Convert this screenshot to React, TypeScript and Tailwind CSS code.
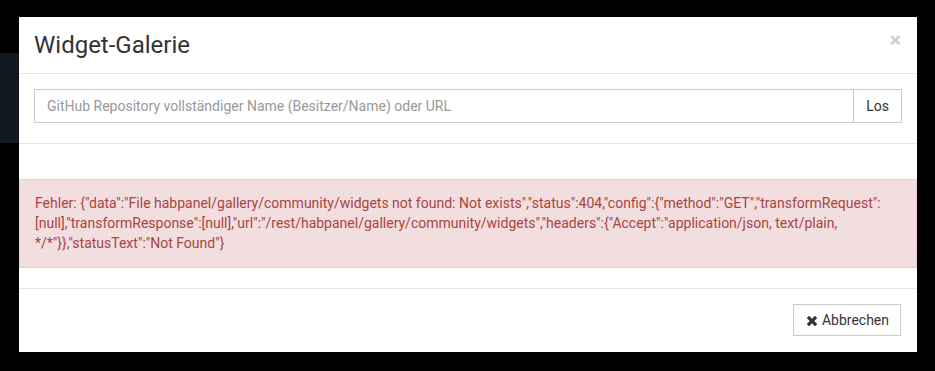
import React from "react";

function TimesIcon() {
  return (
    <svg viewBox="0 0 1408 1792" className="h-[15px] w-[12px]" fill="#333">
      <path d="M1298 1322q0 40-28 68l-136 136q-28 28-68 28t-68-28l-294-294-294 294q-28 28-68 28t-68-28l-136-136q-28-28-28-68t28-68l294-294-294-294q-28-28-28-68t28-68l136-136q28-28 68-28t68 28l294 294 294-294q28-28 68-28t68 28l136 136q28 28 28 68t-28 68l-294 294 294 294q28 28 28 68z" />
    </svg>
  );
}

export default function App() {
  const err =
    'Fehler: {"data":"File habpanel/gallery/community/widgets not found: Not exists","status":404,"config":{"method":"GET","transformRequest":[null],"transformResponse":[null],"url":"/rest/habpanel/gallery/community/widgets","headers":{"Accept":"application/json, text/plain, */*"}},"statusText":"Not Found"}';
  return (
    <div className="relative h-[371px] w-[935px] overflow-hidden bg-black pl-[19px] pt-[17px] font-['Roboto',sans-serif] text-[14px] text-[#333]">
      <div className="absolute left-0 top-[53px] h-[90px] w-[300px] bg-[#131920]" />
      <div className="relative w-[898px] bg-white">
        <div className="flex items-start justify-between border-b border-[#e5e5e5] px-[15px] py-[15px]">
          <h3 className="m-0 text-[24px] font-normal leading-[26px] text-[#333]">Widget-Galerie</h3>
          <button className="-mt-[2px] mr-[1px] text-[21px] font-bold leading-[21px] text-[#ccc]">×</button>
        </div>
        <div className="border-b border-[#e5e5e5] px-[15px] pb-[20px] pt-[15px]">
          <div className="flex h-[34px]">
            <input
              className="h-[34px] min-w-0 flex-1 border border-[#ccc] bg-white px-[12px] text-[14px] text-[#555] outline-none placeholder:text-[#999]"
              placeholder="GitHub Repository vollständiger Name (Besitzer/Name) oder URL"
            />
            <button className="-ml-px h-[34px] border border-[#ccc] bg-white px-[12px] text-[14px] leading-[20px] text-[#333]">
              Los
            </button>
          </div>
        </div>
        <div className="border-b border-[#e5e5e5] pb-[20px] pt-[35px]">
          <div className="border border-[#ebccd1] bg-[#f2dede] px-[15px] pb-[14px] pt-[13px] text-[14px] leading-[20px] text-[#a94442]">
            {err}
          </div>
        </div>
        <div className="flex justify-end pb-[16px] pl-[15px] pr-[16px] pt-[15px]">
          <button className="flex h-[32px] items-center gap-[4px] border border-[#ccc] bg-white pl-[12px] pr-[11px] text-[14px] leading-[20px] text-[#333]">
            <TimesIcon />
            <span>Abbrechen</span>
          </button>
        </div>
      </div>
    </div>
  );
}
